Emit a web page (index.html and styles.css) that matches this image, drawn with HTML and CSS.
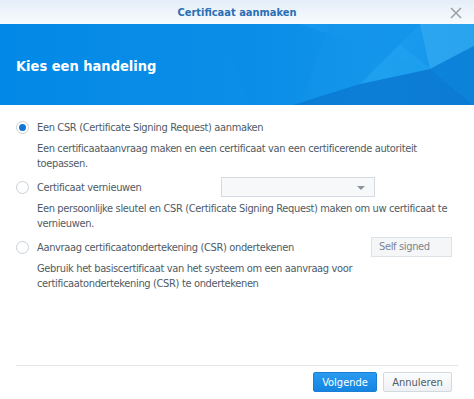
FILE: index.html
```html
<!DOCTYPE html>
<html>
<head>
<meta charset="utf-8">
<link rel="stylesheet" href="styles.css">
</head>
<body>
<div class="dialog">
  <div class="titlebar">
    <span class="title">Certificaat aanmaken</span>
    <svg class="close" width="12" height="12" viewBox="0 0 12 12"><path d="M1 1L11 11M11 1L1 11" stroke="#9aa3ab" stroke-width="1.6"/></svg>
  </div>
  <div class="banner">
    <svg class="facets" width="474" height="82" viewBox="0 0 474 82" preserveAspectRatio="none">
      <polygon points="220,0 330,0 300,82 250,82" fill="#0a8ce6" opacity="0.5"/>
      <polygon points="300,0 420,0 430,45" fill="#1a9bee" opacity="0.6"/>
      <polygon points="330,0 420,0 360,60 300,82" fill="#0d90e8" opacity="0.5"/>
      <polygon points="420,0 474,0 474,22 430,45" fill="#36acf2" opacity="0.7"/>
      <polygon points="430,45 474,22 474,82" fill="#0b7fd6" opacity="0.8"/>
      <polygon points="360,60 430,45 474,82 290,82" fill="#0872cc" opacity="0.7"/>
      <polygon points="400,20 430,45 360,60" fill="#22a3f0" opacity="0.6"/>
    </svg>
    <h1 class="heading">Kies een handeling</h1>
  </div>
  <div class="content">
    <div class="option">
      <div class="row">
        <span class="radio checked"></span>
        <span class="label">Een CSR (Certificate Signing Request) aanmaken</span>
      </div>
      <p class="desc">Een certificaataanvraag maken en een certificaat van een certificerende autoriteit toepassen.</p>
    </div>
    <div class="option">
      <div class="row">
        <span class="radio"></span>
        <span class="label grow">Certificaat vernieuwen</span>
        <span class="select"><span class="caret"></span></span>
      </div>
      <p class="desc">Een persoonlijke sleutel en CSR (Certificate Signing Request) maken om uw certificaat te vernieuwen.</p>
    </div>
    <div class="option">
      <div class="row">
        <span class="radio"></span>
        <span class="label grow">Aanvraag certificaatondertekening (CSR) ondertekenen</span>
        <span class="field">Self signed</span>
      </div>
      <p class="desc">Gebruik het basiscertificaat van het systeem om een aanvraag voor certificaatondertekening (CSR) te ondertekenen</p>
    </div>
  </div>
  <div class="footer">
    <button class="btn primary">Volgende</button>
    <button class="btn">Annuleren</button>
  </div>
</div>
</body>
</html>
```
FILE: styles.css
```css
html, body {
  margin: 0;
  padding: 0;
  background: #fff;
}
body {
  font-family: "DejaVu Sans Condensed", "DejaVu Sans", sans-serif;
  font-size: 11px;
  letter-spacing: -0.35px;
  color: #4f5b66;
}
.dialog {
  width: 474px;
  height: 399px;
  display: flex;
  flex-direction: column;
  overflow: hidden;
}
.titlebar {
  height: 24px;
  flex: none;
  background: linear-gradient(#e4eef8, #f8fbfd);
  display: flex;
  align-items: center;
  justify-content: center;
  position: relative;
}
.title {
  color: #2a6fb5;
  font-weight: bold;
  font-size: 11px;
  letter-spacing: 0;
}
.close {
  position: absolute;
  right: 12px;
  top: 7px;
}
.banner {
  height: 81px;
  flex: none;
  background: linear-gradient(90deg, #0288e6 0%, #0b8ee8 50%, #1a9cee 80%, #108ee6 100%);
  position: relative;
  display: flex;
  align-items: center;
  overflow: hidden;
}
.facets {
  position: absolute;
  left: 0;
  top: 0;
}
.heading {
  position: relative;
  margin: 0 0 0 16px;
  padding-top: 2px;
  color: #fff;
  font-size: 14.5px;
  font-weight: bold;
  letter-spacing: 0;
}
.content {
  flex: 1;
  padding: 12px 22px 0 16px;
}
.option {
  margin-bottom: 6px;
}
.row {
  display: flex;
  align-items: center;
  height: 20px;
}
.radio {
  width: 13px;
  height: 13px;
  border: 1px solid #c9d0d6;
  border-radius: 50%;
  box-sizing: border-box;
  margin-left: 0;
  margin-right: 8px;
  flex: none;
  background: #fff;
  display: flex;
  align-items: center;
  justify-content: center;
}
.radio.checked::after {
  content: "";
  width: 7px;
  height: 7px;
  border-radius: 50%;
  background: #1177d6;
}
.label {
  color: #4f5b66;
}
.grow {
  flex: 1;
}
.select {
  width: 154px;
  height: 20px;
  box-sizing: border-box;
  border: 1px solid #d4dae0;
  background: #f6f8fa;
  margin-right: 77px;
  position: relative;
}
.caret {
  position: absolute;
  right: 9px;
  top: 8px;
  border-left: 4px solid transparent;
  border-right: 4px solid transparent;
  border-top: 4px solid #8c959e;
}
.field {
  width: 81px;
  height: 20px;
  box-sizing: border-box;
  border: 1px solid #dde2e7;
  background: #f4f6f8;
  color: #7b858f;
  padding-left: 7px;
  line-height: 18px;
}
.desc {
  margin: 5px 0 0 21px;
  line-height: 14.5px;
}
.footer {
  flex: none;
  margin: 0 16px;
  border-top: 1px solid #e3e6e9;
  padding: 6px 6px 7px 0;
  display: flex;
  justify-content: flex-end;
  gap: 6px;
}
.btn {
  font-family: "DejaVu Sans Condensed", "DejaVu Sans", sans-serif;
  font-size: 11px;
  height: 20px;
  padding: 0;
  border: 1px solid #d3d9df;
  border-radius: 2px;
  background: linear-gradient(#fbfcfd, #eef1f4);
  color: #4f5b66;
}
.btn.primary {
  background: linear-gradient(#2a9af0, #1485e2);
  border-color: #1a7fd4;
  color: #fff;
  width: 64px;
}
.btn:not(.primary) {
  width: 69px;
}
```
